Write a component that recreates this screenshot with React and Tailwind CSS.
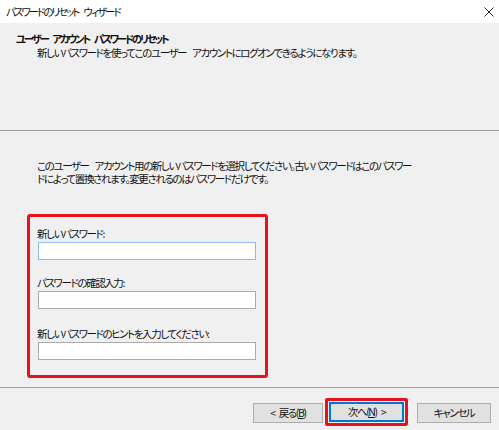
import React from "react";

const font = {
  fontFamily: '"Noto Sans CJK JP", "Noto Sans", sans-serif',
};

// replaces plain spaces by a fixed-width gap, like the dialog font shows them
function T({ children, gap = "w-[6px]" }) {
  const parts = children.split(" ");
  return parts.map((p, i) => (
    <React.Fragment key={i}>
      {i > 0 && <span className={"inline-block " + gap} />}
      {p}
    </React.Fragment>
  ));
}

function Field({ label, focused, className = "" }) {
  return (
    <div className={className}>
      <div className="h-[13px] leading-[13px] pl-[7px]">{label}</div>
      <input
        type="text"
        className={
          "block ml-[8px] mt-[2px] w-[218px] h-[18px] bg-white border outline-none " +
          (focused ? "border-[#8fbbe8]" : "border-[#ababab]")
        }
      />
    </div>
  );
}

export default function App() {
  return (
    <div
      className="w-[499px] h-[430px] bg-[#f0f0f0] text-[10.5px] text-[#111] flex flex-col overflow-hidden [font-feature-settings:'palt'] tracking-[-1.4px]"
      style={font}
    >
      {/* title bar */}
      <div className="h-[23px] bg-white flex items-center justify-between pl-[6px] pr-[5px] shrink-0">
        <span className="leading-[13px] tracking-[-2px]">
          <T gap="w-[5px]">パスワードのリセット ウィザード</T>
        </span>
        <svg width="10" height="10" viewBox="0 0 10 10">
          <path d="M0.5 0.5 L9.5 9.5 M9.5 0.5 L0.5 9.5" stroke="#222" strokeWidth="1" />
        </svg>
      </div>

      {/* header */}
      <div className="h-[108px] shrink-0 border-b border-[#a0a0a0] pt-[9px]">
        <div className="pl-[16px] font-bold leading-[13px] tracking-[-2.3px]">
          <T gap="w-[5px]">ユーザー アカウント パスワードのリセット</T>
        </div>
        <div className="pl-[37px] leading-[13px] mt-[1px]">
          <T>新しいパスワードを使ってこのユーザー アカウントにログオンできるようになります。</T>
        </div>
      </div>

      {/* body */}
      <div className="flex-1 pt-[28px]">
        <div className="pl-[37px] leading-[13px] whitespace-nowrap">
          <T>このユーザー アカウント用の新しいパスワードを選択してください。古いパスワードはこのパスワー</T>
          <br />
          ドによって置換されます。変更されるのはパスワードだけです。
        </div>

        <div className="ml-[27px] mt-[29px] w-[241px] h-[164px] border-[3px] border-[#e5141c] rounded-[3px] pt-[10px]">
          <Field label="新しいパスワード:" focused />
          <Field label="パスワードの確認入力:" className="mt-[16px]" />
          <Field label="新しいパスワードのヒントを入力してください:" className="mt-[18px]" />
        </div>
      </div>

      {/* footer */}
      <div className="h-[43px] shrink-0 border-t border-[#a0a0a0] flex justify-end items-start pt-[10px] pr-[8px]">
        <button className="mt-[5px] w-[70px] h-[20px] bg-[#e1e1e1] border border-[#adadad] leading-[18px]">
          &lt;<span className="inline-block w-[4px]" />戻る(<span className="underline">B</span>)
        </button>
        <div className="ml-[2px] border-[3px] border-[#e5141c] rounded-[2px] p-px">
          <button className="block w-[75px] h-[20px] bg-[#e1e1e1] border-2 border-[#0078d7] leading-[16px]">
            次へ(<span className="underline">N</span>)<span className="inline-block w-[4px]" />&gt;
          </button>
        </div>
        <button className="ml-[9px] mt-[5px] w-[74px] h-[20px] bg-[#e1e1e1] border border-[#adadad] leading-[18px]">
          キャンセル
        </button>
      </div>
    </div>
  );
}
